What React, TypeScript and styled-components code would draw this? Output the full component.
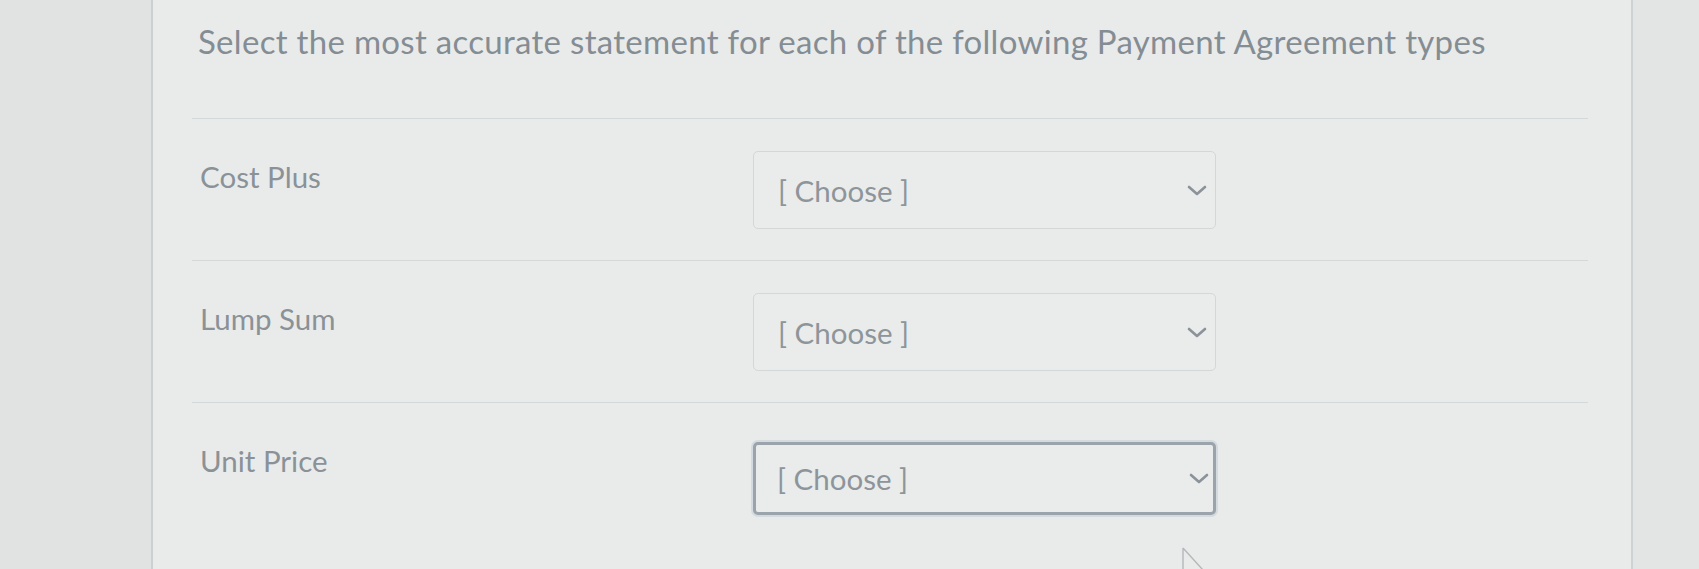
import React from "react";
import styled, { createGlobalStyle, css } from "styled-components";

const GlobalStyle = createGlobalStyle`
  html, body {
    margin: 0;
    padding: 0;
    background: #dfe1e0;
  }
  body {
    font-family: Lato, "Noto Sans", "Liberation Sans", sans-serif;
    color: #8a9298;
  }
`;

const Page = styled.div`
  position: relative;
  display: flex;
  height: 569px;
  overflow: hidden;
`;

const Gutter = styled.div`
  flex: 0 0 151px;
  background: #e1e3e2;
`;

const RightGutter = styled.div`
  flex: 1;
  background: #e3e5e4;
`;

const Panel = styled.main`
  flex: 0 0 1482px;
  box-sizing: border-box;
  background: #e9ebea;
  border-left: 2px solid #cdd0d0;
  border-right: 2px solid #cfd2d2;
  padding: 22px 0 0 45px;
`;

const Title = styled.h1`
  margin: 0;
  font-size: 33px;
  line-height: 39px;
  letter-spacing: 0.3px;
  font-weight: 400;
  color: #858d94;
  white-space: nowrap;
`;

const QuestionList = styled.div`
  margin: 57px 0 0 -6px;
  width: 1396px;
`;

const Row = styled.div`
  display: grid;
  grid-template-columns: 561px 463px;
  align-items: start;
  border-top: 1px solid #d5d8d8;
  padding: 32px 0 31px;
`;

const Label = styled.div`
  padding: 8px 0 0 8px;
  font-size: 29.5px;
  line-height: 35px;
  color: #8a9298;
`;

const Select = styled.div<{ $focused?: boolean }>`
  box-sizing: border-box;
  height: 78px;
  display: flex;
  align-items: center;
  justify-content: space-between;
  padding: 0 8px 0 24px;
  border: 1px solid #d4d7d8;
  border-radius: 5px;
  background: #eaeceb;
  font-size: 29.5px;
  color: #8d959b;
  ${(p) =>
    p.$focused &&
    css`
      height: 73px;
      margin-top: 7px;
      padding: 0 4px 0 21px;
      border: 3px solid #9ca4ab;
      box-shadow: 0 0 0 2px #d3dbe0;
    `}
`;

const Chevron = styled.svg`
  flex: 0 0 auto;
  width: 20px;
  height: 11px;
`;

const Cursor = styled.svg`
  position: absolute;
  left: 1181px;
  top: 546px;
  width: 30px;
  height: 30px;
`;

const ChevronIcon = () => (
  <Chevron viewBox="0 0 20 11">
    <polyline
      points="2,2 10,9 18,2"
      fill="none"
      stroke="#8b9299"
      strokeWidth="2.6"
      strokeLinecap="round"
      strokeLinejoin="round"
    />
  </Chevron>
);

const rows = [
  { label: "Cost Plus" },
  { label: "Lump Sum" },
  { label: "Unit Price", focused: true },
];

export default function App() {
  return (
    <>
      <GlobalStyle />
      <Page>
        <Gutter />
        <Panel>
          <Title>
            Select the most accurate statement for each of the following Payment Agreement types
          </Title>
          <QuestionList>
            {rows.map((r) => (
              <Row key={r.label}>
                <Label>{r.label}</Label>
                <Select $focused={r.focused}>
                  <span>[ Choose ]</span>
                  <ChevronIcon />
                </Select>
              </Row>
            ))}
          </QuestionList>
        </Panel>
        <RightGutter />
        <Cursor viewBox="0 0 30 30">
          <path d="M2 2 L2 28 M2 2 L22 24" fill="none" stroke="#b4b8bb" strokeWidth="1.4" />
        </Cursor>
      </Page>
    </>
  );
}
